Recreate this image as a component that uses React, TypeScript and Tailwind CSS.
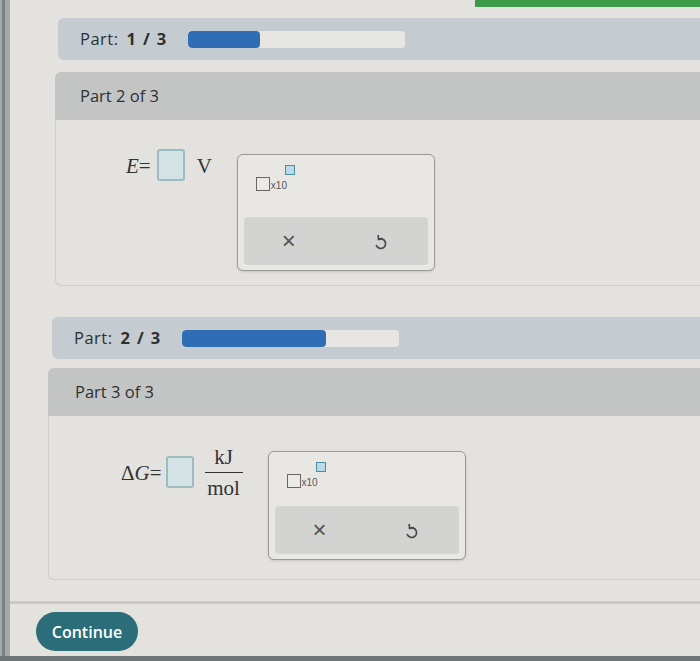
import React from "react";

const UndoIcon = () => (
  <svg width="14" height="17" viewBox="0 0 14 17" fill="none" stroke="#474b4c" strokeWidth="1.7" strokeLinecap="round" strokeLinejoin="round">
    <path d="M4.6 6.4 A4.8 4.8 0 1 1 2.4 12.6" />
    <path d="M4.2 2.6 L4.6 6.4 L8.2 5.6" />
  </svg>
);

const ExpButton = () => (
  <div className="flex items-end">
    <div className="w-[14px] h-[14px] border border-[#666] bg-[#eceae7]" />
    <div className="flex items-start">
      <span className="text-[10px] leading-none text-[#555] mt-[6px] ml-[1px]" style={{ fontFamily: "Arial, sans-serif" }}>
        x10
      </span>
      <div className="w-[10px] h-[10px] border border-[#4a8ea4] bg-[#b8dce6] -mt-[10px] -ml-[2px]" />
    </div>
  </div>
);

const Tools = ({ className = "" }: { className?: string }) => (
  <div className={`w-[198px] rounded-md border border-[#9a9a9a] bg-[#e9e7e4] shadow-sm flex flex-col pb-[5px] ${className}`}>
    <div className="flex-1 pl-[18px] pt-[20px]">
      <ExpButton />
    </div>
    <div className="mx-[6px] h-[48px] rounded-sm bg-[#d3d3d2] flex items-center">
      <span className="w-1/2 pl-[38px] text-[24px] leading-none text-[#555]" style={{ fontFamily: "Arial, sans-serif" }}>
        ×
      </span>
      <span className="w-1/2 pl-[38px] flex">
        <UndoIcon />
      </span>
    </div>
  </div>
);

const AnswerBox = () => (
  <div className="w-[28px] h-[32px] rounded-[3px] border-2 border-[#9cbcc4] bg-[#d3e2e5]" />
);

const PartBar = ({ n, fill, ml }: { n: number; fill: number; ml: string }) => (
  <div className={`${ml} h-[42px] rounded-l-md bg-[#c4ccd2] flex items-center pl-[22px] text-[16.5px] text-[#2f2f2f]`}>
    <span className="flex">
      <span className="tracking-[0.5px]">Part:</span>
      <b className="ml-[8px]">{n}</b>
      <b className="ml-[7px]">/</b>
      <b className="ml-[7px]">3</b>
    </span>
    <div className="ml-[22px] w-[217px] h-[17px] rounded-sm bg-[#e7e6e3] overflow-hidden">
      <div className="h-full rounded-sm bg-[#2f6db5]" style={{ width: fill }} />
    </div>
  </div>
);

export default function App() {
  return (
    <div className="w-[700px] h-[661px] overflow-hidden bg-[#e4e2df] flex flex-col" style={{ fontFamily: "'Open Sans', sans-serif" }}>
      <div className="flex flex-1">
        {/* left edge */}
        <div className="w-[10px] bg-[#a3a8a9] flex">
          <div className="w-[3px] ml-[2px] bg-[#7b8284]" />
        </div>

        <div className="flex-1 flex flex-col">
          <div className="h-[7px] flex justify-end">
            <div className="w-[225px] bg-[#3f9b4c]" />
          </div>

          <div className="mt-[11px]">
            <PartBar n={1} fill={72} ml="ml-[48px]" />
          </div>

          {/* part 2 of 3 */}
          <div className="ml-[45px] mt-[12px]">
            <div className="h-[48px] rounded-tl-md bg-[#c3c5c5] flex items-center pl-[25px] text-[16.5px] text-[#2f2f2f]">
              Part 2 of 3
            </div>
            <div className="h-[166px] border border-t-0 border-r-0 border-[#cdccc9] rounded-bl-md flex pt-[29px] pl-[70px]">
              <div className="flex items-start gap-[6px] text-[21px] text-[#333]" style={{ fontFamily: "'Liberation Serif', serif" }}>
                <span className="mt-[2px]">
                  <i>E</i>=
                </span>
                <AnswerBox />
                <span className="mt-[2px] ml-[6px]">V</span>
              </div>
              <Tools className="ml-[25px] mt-[5px] h-[117px]" />
            </div>
          </div>

          <div className="mt-[31px]">
            <PartBar n={2} fill={144} ml="ml-[42px]" />
          </div>

          {/* part 3 of 3 */}
          <div className="ml-[38px] mt-[9px]">
            <div className="h-[48px] rounded-tl-md bg-[#c3c5c5] flex items-center pl-[27px] text-[16.5px] text-[#2f2f2f]">
              Part 3 of 3
            </div>
            <div className="h-[164px] border border-t-0 border-r-0 border-[#cdccc9] rounded-bl-md flex pt-[40px] pl-[72px]">
              <div className="flex items-start gap-[4px] text-[21px] text-[#333]" style={{ fontFamily: "'Liberation Serif', serif" }}>
                <span className="mt-[2px]">
                  Δ<i>G</i>=
                </span>
                <AnswerBox />
                <div className="ml-[7px] -mt-[9px] flex flex-col items-center leading-none">
                  <span className="px-[2px] pb-[4px]">kJ</span>
                  <div className="w-[38px] h-[1px] bg-[#333]" />
                  <span className="pt-[5px]">mol</span>
                </div>
              </div>
              <Tools className="ml-[25px] -mt-[5px] h-[109px]" />
            </div>
          </div>

          <div className="mt-[21px] h-[3px] bg-[#c9c9c7]" />

          <div className="ml-[26px] mt-[8px]">
            <button className="w-[102px] h-[39px] rounded-full bg-[#2b6d78] text-white text-[16px] font-semibold">
              Continue
            </button>
          </div>
        </div>
      </div>
      <div className="h-[5px] bg-[#6f7577]" />
    </div>
  );
}
